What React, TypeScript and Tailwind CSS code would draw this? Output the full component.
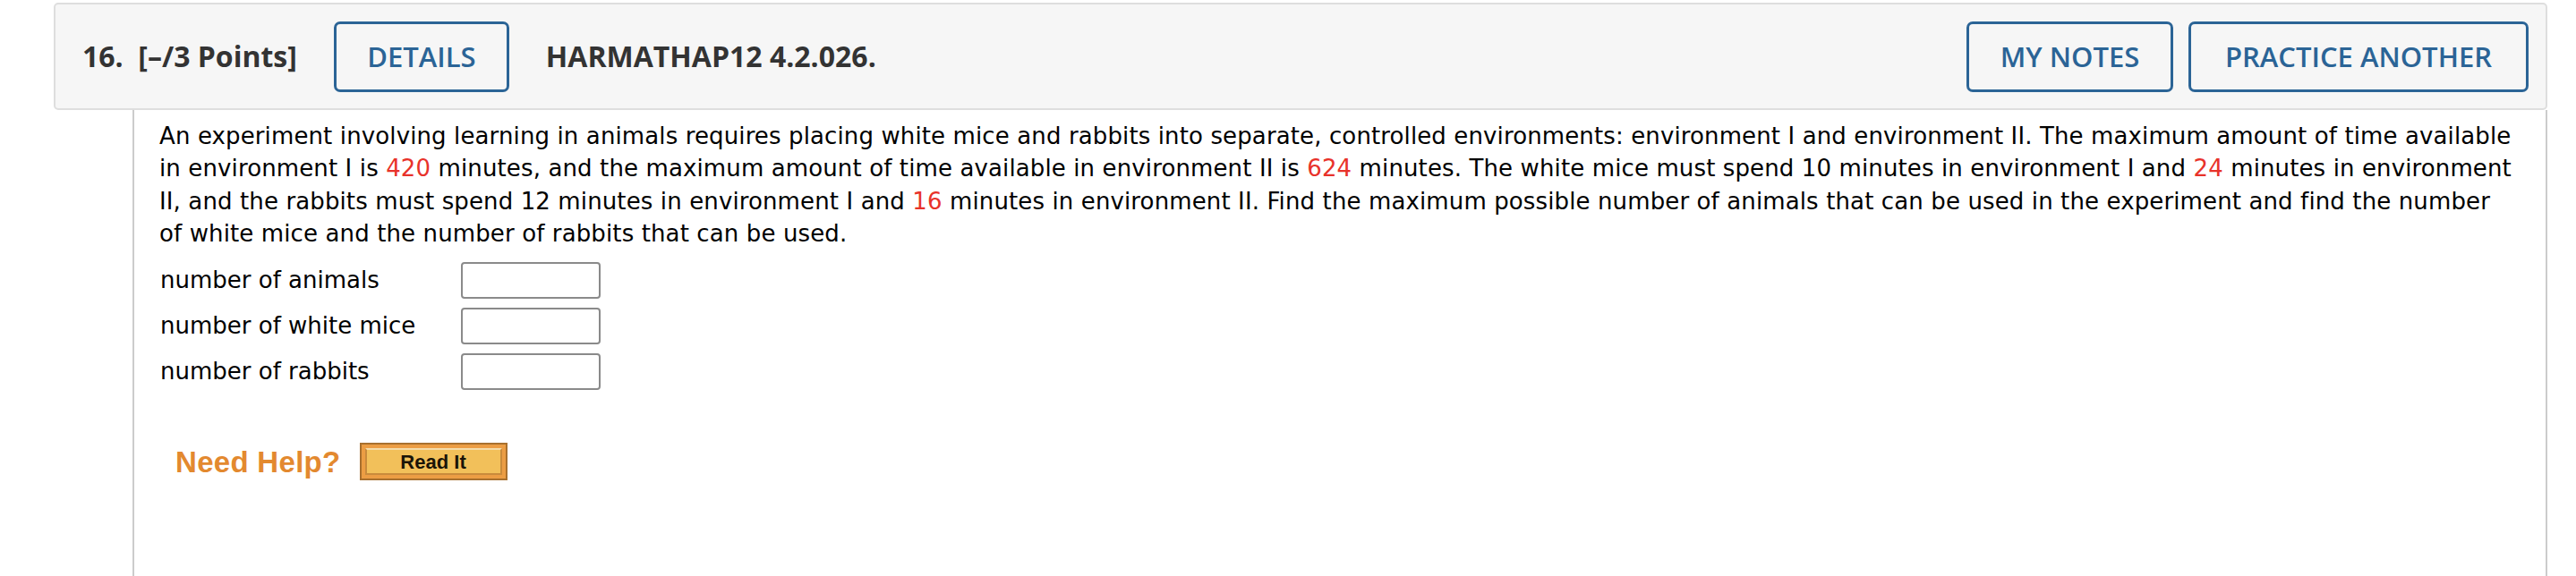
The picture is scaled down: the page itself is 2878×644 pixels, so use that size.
import React from 'react';

const Red: React.FC<{ children: React.ReactNode }> = ({ children }) => (
  <span className="text-[#e8322a]">{children}</span>
);

const HeaderButton: React.FC<{ label: string; width: string }> = ({ label, width }) => (
  <button
    className={`${width} h-[79px] shrink-0 border-[3px] border-[#2b6496] rounded-[7px] text-[#2b6496] text-[31px] font-semibold flex items-center justify-center`}
  >
    {label}
  </button>
);

const answers = ['number of animals', 'number of white mice', 'number of rabbits'];

export default function App() {
  return (
    <div className="w-[2878px] h-[644px] overflow-hidden bg-white pl-[60px] pt-[3px]">
      <div className="w-[2786px]">
        {/* question header */}
        <div
          className="h-[120px] flex items-center bg-[#f6f6f6] border-2 border-[#dedede] rounded-[5px] pl-[30px] pr-[19px] text-[#333333]"
          style={{ fontFamily: '"Open Sans", sans-serif' }}
        >
          <span className="text-[32px] font-bold whitespace-pre">16.{'  '}[–/3 Points]</span>
          <div className="ml-[41px]">
            <HeaderButton label="DETAILS" width="w-[196px]" />
          </div>
          <span className="ml-[41px] text-[32px] font-bold">HARMATHAP12 4.2.026.</span>
          <div className="ml-auto flex gap-[17px]">
            <HeaderButton label="MY NOTES" width="w-[231px]" />
            <HeaderButton label="PRACTICE ANOTHER" width="w-[380px]" />
          </div>
        </div>

        {/* question body */}
        <div
          className="ml-[88px] h-[521px] border-l-2 border-r-2 border-[#cccccc] pl-[28px] pt-[11px] text-black"
          style={{ fontFamily: '"DejaVu Sans", Verdana, sans-serif' }}
        >
          <p className="text-[26px] leading-[36.4px] tracking-[0.12px] whitespace-nowrap">
            An experiment involving learning in animals requires placing white mice and rabbits into separate, controlled environments: environment I and environment II. The maximum amount of time available
            <br />
            in environment I is <Red>420</Red> minutes, and the maximum amount of time available in environment II is <Red>624</Red> minutes. The white mice must spend 10 minutes in environment I and <Red>24</Red> minutes in environment
            <br />
            II, and the rabbits must spend 12 minutes in environment I and <Red>16</Red> minutes in environment II. Find the maximum possible number of animals that can be used in the experiment and find the number
            <br />
            of white mice and the number of rabbits that can be used.
          </p>

          <div className="mt-[13px] flex flex-col gap-[10px]">
            {answers.map((a) => (
              <div key={a} className="flex items-center h-[41px]">
                <span className="w-[337px] text-[26px] pl-px">{a}</span>
                <input
                  type="text"
                  className="w-[156px] h-[41px] border-2 border-[#8a8a8a] rounded-[4px] bg-white"
                />
              </div>
            ))}
          </div>

          <div className="mt-[56px] flex items-center pl-[18px]">
            <span
              className="text-[33px] font-bold text-[#e3892f] tracking-[0.3px]"
              style={{ fontFamily: '"Liberation Sans", Arial, sans-serif' }}
            >
              Need Help?
            </span>
            <div className="ml-[21px] w-[165px] h-[42px] border-2 border-[#a8702e] bg-[#ec9d44] p-[4px]">
              <div className="w-full h-full border-2 border-[#c98b3c] border-t-[#f5dcaa] bg-[#f2c05a] flex items-center justify-center">
                <span
                  className="text-[22px] font-bold text-[#1a1408]"
                  style={{ fontFamily: '"Liberation Sans", Arial, sans-serif' }}
                >
                  Read It
                </span>
              </div>
            </div>
          </div>
        </div>
      </div>
    </div>
  );
}
